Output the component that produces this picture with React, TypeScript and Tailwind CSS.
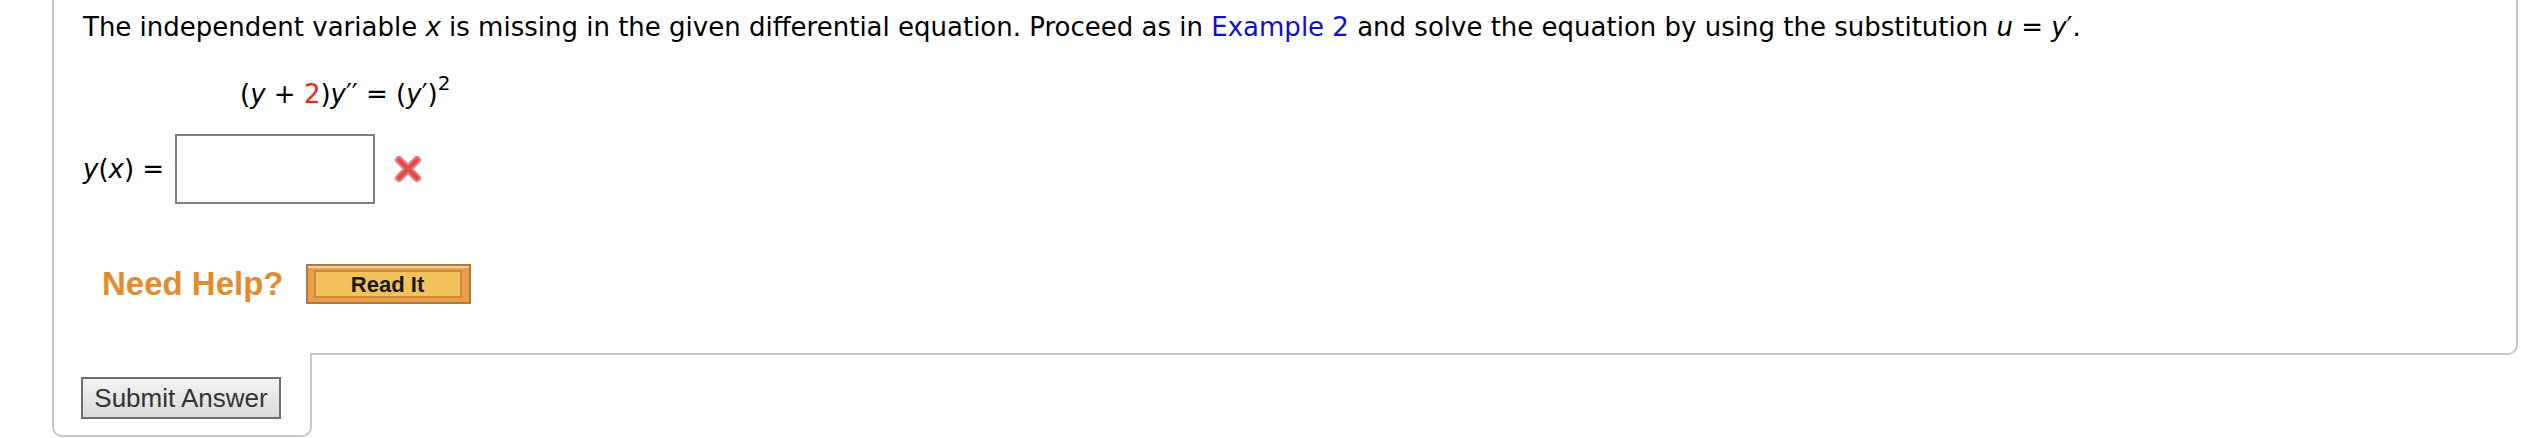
export default function App() {
  return (
    <div className="min-h-[438px] bg-white text-black font-['DejaVu_Sans',Verdana,sans-serif]">
      {/* question panel, its top edge runs off the page */}
      <div className="ml-[52px] mr-[12px] h-[355px] border-x-2 border-b-2 border-[#c8c8c8] rounded-br-[10px] pl-[29px] pt-[9px]">
        <p className="text-[26px] leading-[36px] whitespace-nowrap">
          The independent variable <i>x</i> is missing in the given differential equation. Proceed as in{' '}
          <a className="text-[#1010cc]">Example 2</a> and solve the equation by using the substitution <i>u</i> ={' '}
          <i>y</i>′.
        </p>

        <p className="mt-[31px] ml-[157px] text-[26px] leading-[36px] whitespace-nowrap">
          (<i>y</i> + <span className="text-[#e52b1f]">2</span>)<i>y</i>′′ = (<i>y</i>′)
          <span className="relative -top-[13px] text-[20px]">2</span>
        </p>

        <div className="mt-[20px] flex h-[70px] items-center">
          <span className="text-[26px] leading-[36px] whitespace-nowrap">
            <i>y</i>(<i>x</i>) =
          </span>
          <div className="ml-[11px] h-[70px] w-[200px] border-2 border-[#808080] bg-white" />
          <svg className="ml-[19px]" width="28" height="28" viewBox="0 0 28 28">
            <path d="M5 5 L23 23 M23 5 L5 23" stroke="#eb8080" strokeWidth="8" strokeLinecap="round" />
            <path d="M5 5 L23 23 M23 5 L5 23" stroke="#dd4c4c" strokeWidth="4" strokeLinecap="round" />
          </svg>
        </div>

        <div className="mt-[60px] ml-[19px] flex h-[40px] items-center gap-[22px]">
          <span className="font-['Liberation_Sans',Arial,sans-serif] text-[33px] leading-[40px] font-bold text-[#e38b2f]">
            Need Help?
          </span>
          <div className="h-[40px] w-[165px] border-2 border-[#a97a43] bg-[#ec9d45] pt-[4px] pb-[4px] pl-[6px] pr-[7px] shadow-[inset_0_2px_0_#f5cfa5]">
            <div className="flex h-full items-center justify-center border-2 border-[#c4893c] bg-[#f3c15b] font-['Liberation_Sans',Arial,sans-serif] text-[22px] font-bold text-[#1a1a1a]">
              Read It
            </div>
          </div>
        </div>
      </div>

      {/* submit tab hanging below the panel */}
      <div className="relative -mt-[2px] ml-[52px] h-[84px] w-[260px] rounded-b-[10px] border-x-2 border-b-2 border-[#c8c8c8] bg-white pl-[27px] pt-[24px]">
        <button className="h-[42px] w-[200px] border-2 border-[#6e6e6e] bg-linear-to-b from-[#f3f3f3] to-[#d9d9d9] font-['Liberation_Sans',Arial,sans-serif] text-[26px] leading-none text-[#333]">
          Submit Answer
        </button>
      </div>
    </div>
  );
}
